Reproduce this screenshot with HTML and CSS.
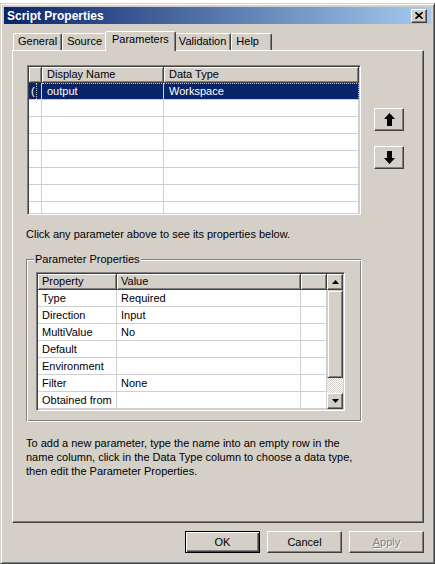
FILE: index.html
```html
<!DOCTYPE html>
<html lang="en">
<head>
  <meta charset="UTF-8">
  <title>Script Properties</title>
  <link rel="stylesheet" href="styles.css">
</head>
<body>
  <div class="window">
    <div class="titlebar">
      <span class="title">Script Properties</span>
      <span class="close">
        <svg width="8" height="7" viewBox="0 0 8 7"><path d="M0.5 0.3L7.5 6.7M7.5 0.3L0.5 6.7" stroke="#000" stroke-width="1.7"/></svg>
      </span>
    </div>
    <div class="client">
      <div class="tabs">
        <div class="tab">General</div>
        <div class="tab">Source</div>
        <div class="tab active">Parameters</div>
        <div class="tab">Validation</div>
        <div class="tab tab-help">Help</div>
      </div>
      <div class="panel">
        <div class="params">
          <div class="grid grid-params">
            <table>
              <colgroup><col style="width:13px"><col style="width:122px"><col></colgroup>
              <tr><th></th><th>Display Name</th><th>Data Type</th></tr>
              <tr class="selected"><td class="rowhead"><span>(</span></td><td>output</td><td>Workspace</td></tr>
              <tr><td></td><td></td><td></td></tr>
              <tr><td></td><td></td><td></td></tr>
              <tr><td></td><td></td><td></td></tr>
              <tr><td></td><td></td><td></td></tr>
              <tr><td></td><td></td><td></td></tr>
              <tr><td></td><td></td><td></td></tr>
              <tr><td></td><td></td><td></td></tr>
            </table>
          </div>
          <div class="move">
            <div class="btn btn-icon">
              <svg width="11" height="13" viewBox="0 0 11 13"><polygon points="5.5,0 11,6 8,6 8,13 3,13 3,6 0,6" fill="#000"/></svg>
            </div>
            <div class="btn btn-icon">
              <svg width="11" height="13" viewBox="0 0 11 13"><polygon points="5.5,13 11,7 8,7 8,0 3,0 3,7 0,7" fill="#000"/></svg>
            </div>
          </div>
        </div>

        <p class="hint">Click any parameter above to see its properties below.</p>

        <div class="group">
          <div class="group-title">Parameter Properties</div>
          <div class="grid grid-props">
            <table>
              <colgroup><col style="width:79px"><col style="width:184px"><col></colgroup>
              <tr><th>Property</th><th>Value</th><th></th></tr>
              <tr><td>Type</td><td>Required</td><td></td></tr>
              <tr><td>Direction</td><td>Input</td><td></td></tr>
              <tr><td>MultiValue</td><td>No</td><td></td></tr>
              <tr><td>Default</td><td></td><td></td></tr>
              <tr><td>Environment</td><td></td><td></td></tr>
              <tr><td>Filter</td><td>None</td><td></td></tr>
              <tr><td>Obtained from</td><td></td><td></td></tr>
            </table>
            <div class="scrollbar">
              <div class="btn sb-btn">
                <svg width="7" height="4" viewBox="0 0 7 4"><polygon points="3.5,0 7,4 0,4" fill="#000"/></svg>
              </div>
              <div class="btn sb-thumb"></div>
              <div class="sb-track"></div>
              <div class="btn sb-btn">
                <svg width="7" height="4" viewBox="0 0 7 4"><polygon points="0,0 7,0 3.5,4" fill="#000"/></svg>
              </div>
            </div>
          </div>
        </div>

        <p class="help">To add a new parameter, type the name into an empty row in the<br>
          name column, click in the Data Type column to choose a data type,<br>
          then edit the Parameter Properties.</p>
      </div>
      <div class="actions">
        <div class="btn btn-push btn-default">OK</div>
        <div class="btn btn-push">Cancel</div>
        <div class="btn btn-push btn-disabled"><u>A</u>pply</div>
      </div>
    </div>
  </div>
</body>
</html>
```

FILE: styles.css
```css
*{
  margin: 0;
  padding: 0;
  box-sizing: border-box;
}
body{
  background: #fff;
  font: 11px "Liberation Sans", Arial, sans-serif;
  color: #000;
}
.window{
  margin-top: 3px;
  width: 435px;
  height: 561px;
  background: #d4d0c8;
  border: 1px solid;
  border-color: #d4d0c8 #404040 #404040 #d4d0c8;
  box-shadow: inset 1px 1px #fff, inset -1px -1px #808080;
  padding: 3px;
  display: flex;
  flex-direction: column;
}
.titlebar{
  height: 17px;
  background: linear-gradient(to right, #0a246a, #a6caf0);
  display: flex;
  align-items: center;
  justify-content: space-between;
  padding: 0 4px 0 3px;
  color: #fff;
  font-weight: bold;
  font-size: 12px;
}
.close{
  width: 16px;
  height: 14px;
  background: #d4d0c8;
  border: 1px solid;
  border-color: #fff #404040 #404040 #fff;
  box-shadow: inset -1px -1px #808080;
  display: flex;
  align-items: center;
  justify-content: center;
}
.client{
  flex: 1;
  display: flex;
  flex-direction: column;
  padding: 7px 7px 7px 8px;
}

/* tabs */
.tabs{
  display: flex;
  align-items: flex-end;
  height: 19px;
  padding-left: 1px;
  position: relative;
  z-index: 1;
}
.tab{
  height: 17px;
  padding: 0 4px;
  line-height: 15px;
  border: 1px solid;
  border-bottom: none;
  border-color: #fff #404040 transparent #fff;
  box-shadow: inset -1px 0 #808080;
  border-radius: 2px 2px 0 0;
  background: #d4d0c8;
}
.tab.active{
  position: relative;
  z-index: 1;
  height: 20px;
  margin: 0 -2px -1px;
  padding: 0 6px;
  line-height: 15px;
}
.tab-help{
  min-width: 41px;
}
.panel{
  flex: 1;
  border: 1px solid;
  border-color: #fff #404040 #404040 #fff;
  box-shadow: inset -1px -1px #808080;
  padding: 14px 0 0 14px;
}

/* grids */
.params{
  display: flex;
  align-items: flex-start;
}
.grid{
  background: #fff;
  border: 1px solid;
  border-color: #808080 #fff #fff #808080;
  box-shadow: inset 1px 1px #404040, inset -1px -1px #d4d0c8;
  padding: 1px;
  overflow: hidden;
}
.grid-params{
  width: 334px;
  height: 150px;
}
.grid table{
  border-collapse: separate;
  border-spacing: 0;
  table-layout: fixed;
  width: 100%;
}
.grid th, .grid td{
  height: 17px;
  padding: 0 4px;
  line-height: 16px;
  border-right: 1px solid #cfcfcf;
  border-bottom: 1px solid #cfcfcf;
  white-space: nowrap;
  overflow: hidden;
  text-align: left;
  font-weight: normal;
}
.grid th{
  height: 16px;
  line-height: 15px;
  background: #d4d0c8;
  border-right-color: #404040;
  border-bottom-color: #404040;
  box-shadow: inset 1px 1px #fff, inset -1px -1px #808080;
}
.grid-params th, .grid-params td{
  padding: 0 5px;
}
.grid-params .rowhead{
  padding: 0 0 0 2px;
}
.rowhead span{
  display: inline-block;
  padding-right: 1px;
  vertical-align: top;
  border-right: 1px dotted #c8c8c8;
}
.selected td{
  background: #0a246a;
  color: #fff;
}
.selected td + td{
  border-top: 1px dotted #c8c8c8;
  line-height: 15px;
}
.selected td:last-child{
  border-right: 1px dotted #c8c8c8;
}
.move{
  display: flex;
  flex-direction: column;
  gap: 15px;
  margin: 43px 0 0 13px;
}
.btn{
  background: #d4d0c8;
  border: 1px solid;
  border-color: #fff #404040 #404040 #fff;
  box-shadow: inset -1px -1px #808080;
  display: flex;
  align-items: center;
  justify-content: center;
}
.btn-icon{
  width: 30px;
  height: 23px;
}
.hint{
  margin: 13px 0 0 -1px;
  line-height: 13px;
}

/* group box */
.group{
  width: 336px;
  margin: 18px 0 0 -1px;
  border: 1px solid;
  border-color: #808080 #fff #fff #808080;
  box-shadow: inset 1px 1px #fff, inset -1px -1px #808080;
  padding: 0 16px 10px 9px;
}
.group-title{
  display: table;
  margin: -7px 0 0 -2px;
  padding: 0 1px;
  line-height: 13px;
  background: #d4d0c8;
}
.grid-props{
  display: flex;
  margin-top: 6px;
  width: 309px;
  height: 139px;
}
.grid-props table{
  flex: 1;
  align-self: flex-start;
}
.scrollbar{
  width: 16px;
  display: flex;
  flex-direction: column;
}
.sb-btn{
  height: 16px;
  flex-shrink: 0;
}
.sb-thumb{
  height: 88px;
  flex-shrink: 0;
  box-shadow: inset 1px 1px #fff, inset -1px -1px #808080;
  border-color: #d4d0c8 #404040 #404040 #d4d0c8;
}
.sb-track{
  flex: 1;
  background: repeating-conic-gradient(#d4d0c8 0 25%, #fff 0 50%) 0 0/2px 2px;
}
.help{
  margin: 14px 0 0 -1px;
  line-height: 14px;
}

/* dialog buttons */
.actions{
  display: flex;
  justify-content: flex-end;
  gap: 7px;
  margin-top: 8px;
}
.btn-push{
  width: 75px;
  height: 22px;
}
.btn-default{
  border-color: #000;
  box-shadow: inset 1px 1px #fff, inset -1px -1px #404040, inset -2px -2px #808080;
}
.btn-disabled{
  color: #808080;
  text-shadow: 1px 1px #fff;
}
```
